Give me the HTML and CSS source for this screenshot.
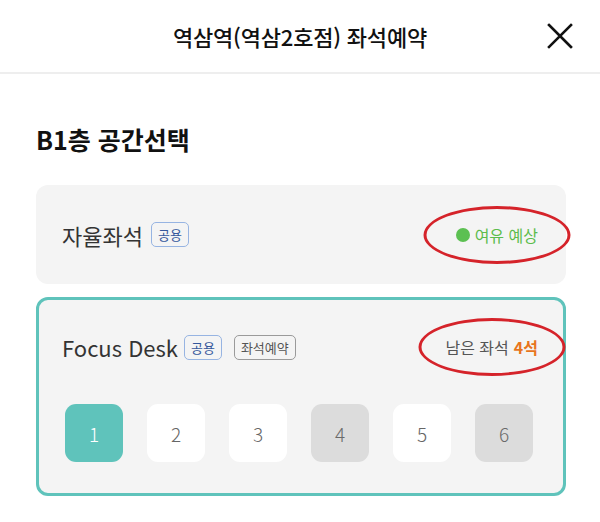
FILE: index.html
```html
<!DOCTYPE html>
<html lang="ko">
<head>
  <meta charset="UTF-8">
  <meta name="viewport" content="width=device-width, initial-scale=1.0">
  <title>좌석예약</title>
  <link rel="stylesheet" href="styles.css">
</head>
<body>
<!-- Top bar -->
<div class="topbar">
  <span></span>
  <h1 class="topbar-title">역삼역(역삼2호점) 좌석예약</h1>
  <button class="close-btn" aria-label="닫기">
    <svg width="26" height="26" viewBox="0 0 26 26">
      <path d="M2 2 L24 24 M24 2 L2 24" stroke="#111" stroke-width="2.6" fill="none" stroke-linecap="square"/>
    </svg>
  </button>
</div>

<div class="content">
  <h2 class="floor-title">B1층 공간선택</h2>

  <div class="space-card">
    <div class="space-name">
      자율좌석 <span class="tag tag-blue">공용</span>
    </div>
    <div class="status status-green">
      <span class="dot"></span>여유 예상
      <span class="mark"></span>
    </div>
  </div>

  <div class="space-card active">
    <div class="space-head">
      <div class="space-name">
        Focus Desk <span class="tag tag-blue">공용</span><span class="tag tag-gray">좌석예약</span>
      </div>
      <div class="status">
        남은 좌석 <b class="count">4석</b>
        <span class="mark"></span>
      </div>
    </div>
    <div class="seats">
      <div class="seat selected">1</div>
      <div class="seat">2</div>
      <div class="seat">3</div>
      <div class="seat taken">4</div>
      <div class="seat">5</div>
      <div class="seat taken">6</div>
    </div>
  </div>
</div>
</body>
</html>
```

FILE: styles.css
```css
* { margin: 0; padding: 0; box-sizing: border-box; font-family: "Noto Sans CJK KR", "Noto Sans", sans-serif; }
body { background: #fff; color: #222; width: 600px; }

/* Top bar */
.topbar {
  height: 74px;
  display: grid;
  grid-template-columns: 1fr auto 1fr;
  align-items: center;
  border-bottom: 2px solid #eeeeee;
}
.topbar-title {
  font-size: 22px;
  font-weight: 500;
  color: #111;
  letter-spacing: -0.2px;
}
.close-btn {
  justify-self: end;
  margin-right: 27px;
  background: none;
  border: none;
  display: flex;
}

/* Content */
.content {
  padding: 0 34px 0 36px;
}
.floor-title {
  font-size: 25px;
  font-weight: 700;
  line-height: 34px;
  margin-top: 48px;
  margin-bottom: 29px;
  color: #111;
}

/* Cards */
.space-card {
  background: #f4f4f4;
  border-radius: 12px;
  height: 99px;
  padding: 0 28px 0 26px;
  display: flex;
  align-items: center;
  justify-content: space-between;
}
.space-card.active {
  height: auto;
  margin-top: 13px;
  border: 3px solid #5fc3bb;
  padding: 34px 25px 31px 23px;
  display: block;
}
.space-head {
  display: flex;
  align-items: center;
  justify-content: space-between;
  height: 26px;
}
.space-name {
  font-size: 22px;
  color: #333;
  display: flex;
  align-items: center;
  gap: 8px;
}
.active .space-name { gap: 6px; }
.tag {
  font-size: 13px;
  line-height: 23px;
  padding: 0 6px;
  border-radius: 5px;
  border: 1px solid;
}
.tag-blue { color: #34579b; border-color: #97b4e2; }
.tag-gray { color: #555; border-color: #9a9a9a; margin-left: 6px; }

/* Status */
.status {
  position: relative;
  font-size: 16px;
  color: #555;
  display: flex;
  align-items: center;
}
.status-green { color: #5cbc4c; }
.dot {
  width: 14px;
  height: 14px;
  border-radius: 50%;
  background: #5cc052;
  margin-right: 5px;
}
.count { color: #e8741d; font-weight: 700; margin-left: 5px; }
.mark {
  position: absolute;
  left: 50%;
  top: 50%;
  width: 147px;
  height: 58px;
  transform: translate(-50%, -50%);
  border: 3px solid #d5232a;
  border-radius: 50%;
}

/* Seats */
.seats {
  display: flex;
  gap: 24px;
  margin: 44px 0 0 3px;
}
.seat {
  width: 58px;
  height: 58px;
  border-radius: 11px;
  background: #fff;
  color: #666;
  font-size: 19px;
  font-weight: 300;
  display: flex;
  align-items: center;
  justify-content: center;
}
.seat.selected { background: #5fc3bb; color: #fff; }
.seat.taken { background: #dcdcdc; color: #6a6a6a; }
```
